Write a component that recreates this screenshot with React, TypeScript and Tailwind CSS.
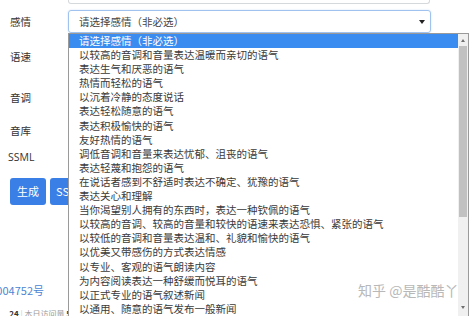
import React from 'react';

const cjk = { fontFamily: '"Noto Sans CJK SC", "Noto Sans", sans-serif' };

const emotions = [
  '请选择感情（非必选）',
  '以较高的音调和音量表达温暖而亲切的语气',
  '表达生气和厌恶的语气',
  '热情而轻松的语气',
  '以沉着冷静的态度说话',
  '表达轻松随意的语气',
  '表达积极愉快的语气',
  '友好热情的语气',
  '调低音调和音量来表达忧郁、沮丧的语气',
  '表达轻蔑和抱怨的语气',
  '在说话者感到不舒适时表达不确定、犹豫的语气',
  '表达关心和理解',
  '当你渴望别人拥有的东西时，表达一种钦佩的语气',
  '以较高的音调、较高的音量和较快的语速来表达恐惧、紧张的语气',
  '以较低的音调和音量表达温和、礼貌和愉快的语气',
  '以优美又带感伤的方式表达情感',
  '以专业、客观的语气朗读内容',
  '为内容阅读表达一种舒缓而悦耳的语气',
  '以正式专业的语气叙述新闻',
  '以通用、随意的语气发布一般新闻',
];

function Row({ label, mt, children }: { label: string; mt: string; children?: React.ReactNode }) {
  return (
    <div className={`flex items-center h-[23px] ${mt}`}>
      <div className="w-[68px] pl-[10px] text-[10.5px] text-[#333]">{label}</div>
      {children}
    </div>
  );
}

export default function App() {
  return (
    <div className="relative h-[316px] w-[474px] overflow-hidden bg-white" style={cjk}>
      {/* Form */}
      <div className="flex flex-col">
        <div className="ml-[68px] w-[362px] h-[4px] border border-t-0 border-[#d6d9dc] rounded-b-[3px]" />
        <Row label="感情" mt="mt-[6px]">
          <div className="flex items-center justify-between w-[363px] h-[23px] border border-[#9fc3ee] rounded-[3px] pl-[10px] pr-[5px] shadow-[0_0_2px_#cfe1f7]">
            <span className="text-[10.5px] text-[#444]">请选择感情（非必选）</span>
            <span className="w-0 h-0 border-l-[3px] border-r-[3px] border-t-[4px] border-l-transparent border-r-transparent border-t-[#222]" />
          </div>
        </Row>
        <Row label="语速" mt="mt-[12px]" />
        <Row label="音调" mt="mt-[18px]" />
        <Row label="音库" mt="mt-[10px]" />
        <div className="flex items-center h-[23px] mt-[4px]">
          <div className="pl-[8px] text-[10.5px] text-[#333]" style={{ fontFamily: '"Open Sans", "Noto Sans", sans-serif' }}>
            SSML
          </div>
        </div>
        <div className="flex gap-[4px] pl-[10px] mt-[9px]">
          <button className="w-[36px] h-[27px] rounded-[3px] bg-[#3a7fe6] text-white text-[11px]">生成</button>
          <button className="w-[60px] h-[27px] rounded-[3px] bg-[#3a7fe6] text-white text-[11px] text-left pl-[6px]">SSML</button>
        </div>
        <div className="mt-[77px] w-[44px] flex justify-end overflow-hidden">
          <span className="whitespace-nowrap text-[11px] text-[#4a86d4]">京ICP备2021004752号</span>
        </div>
        <div className="mt-[9px] w-[90px] flex justify-end overflow-hidden">
          <span className="whitespace-nowrap text-[8px] text-[#999]">
            <b className="text-[#333]">24</b> <span className="text-[#ccc]">|</span> 本日访问量 <b className="text-[#333]">50.9w</b>
          </span>
        </div>
      </div>

      {/* Open dropdown list */}
      <div className="absolute left-[68px] top-[33px] w-[401px] h-[290px] flex border border-[#9a9a9a] bg-white">
        <div className="flex-1 flex flex-col">
          {emotions.map((e, i) => (
            <div
              key={e}
              className={`h-[14.1px] leading-[14px] pl-[10px] text-[10.5px] whitespace-nowrap ${
                i === 0 ? 'bg-[#3b8cf0] text-white' : 'text-[#3a3a3a]'
              }`}
            >
              {e}
            </div>
          ))}
        </div>
        <div className="w-[10px] flex flex-col bg-[#f0f0f0]">
          <div className="h-[12px] flex items-center justify-center">
            <span className="w-0 h-0 border-l-[2.5px] border-r-[2.5px] border-b-[3px] border-l-transparent border-r-transparent border-b-[#707070]" />
          </div>
          <div className="mx-[1px] h-[171px] bg-[#c1c1c1]" />
          <div className="flex-1" />
          <div className="h-[19px] flex items-start justify-center pt-[3px]">
            <span className="w-0 h-0 border-l-[2.5px] border-r-[2.5px] border-t-[3px] border-l-transparent border-r-transparent border-t-[#707070]" />
          </div>
        </div>
      </div>

      {/* Watermark */}
      <div className="absolute left-[358px] top-[280px] text-[14px] text-[#b8b8b8] whitespace-nowrap">
        知乎 @是酷酷丫
      </div>
    </div>
  );
}
